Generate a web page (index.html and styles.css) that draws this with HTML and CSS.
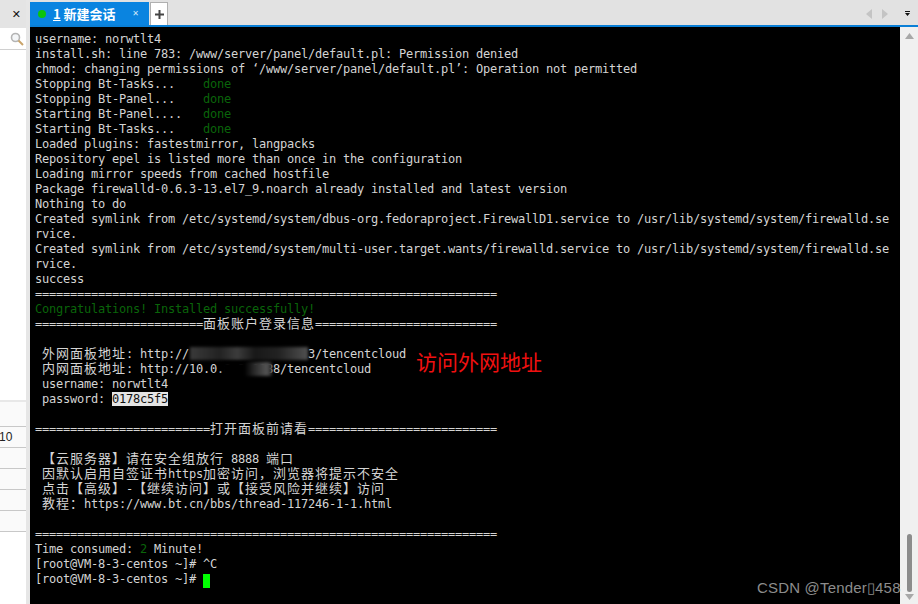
FILE: index.html
```html
<!DOCTYPE html>
<html lang="zh">
<head>
<meta charset="utf-8">
<title>新建会话</title>
<link rel="stylesheet" href="styles.css">
</head>
<body>
<div class="app">
  <aside class="side">
    <div class="side-head"><span class="side-close">✕</span></div>
    <div class="side-search">
      <svg class="search-ico" width="14" height="14" viewBox="0 0 14 14"><circle cx="5.5" cy="5.5" r="4" fill="#f4f6f8" stroke="#b4b4b4" stroke-width="1.6"/><path d="M8.5 8.5L13 13" stroke="#c9a36a" stroke-width="2"/></svg>
    </div>
    <div class="side-blank"></div>
    <div class="side-rows">
      <div class="side-row"></div>
      <div class="side-row"><span class="side-num">10</span></div>
      <div class="side-row"></div>
      <div class="side-row"></div>
      <div class="side-row"></div>
      <div class="side-row"></div>
    </div>
  </aside>
  <main class="main">
    <div class="tabs">
      <div class="tab">
        <span class="dot"></span>
        <span class="tab-title"><u>1</u> 新建会话</span>
        <span class="tab-x">✕</span>
      </div>
      <div class="plus">
        <svg width="11" height="11" viewBox="0 0 11 11"><path d="M5.5 1v9M1 5.5h9" stroke="#444" stroke-width="2"/></svg>
      </div>
      <div class="tab-nav">
        <svg width="6" height="10" viewBox="0 0 6 10"><path d="M6 0v10L0 5z" fill="#c4c4c4"/></svg>
        <svg width="6" height="10" viewBox="0 0 6 10"><path d="M0 0v10l6-5z" fill="#c4c4c4"/></svg>
        <svg class="tab-menu" width="5" height="5" viewBox="0 0 5 5"><path d="M0 0h5v1H0zM0 2h5L2.500 5z" fill="#111"/></svg>
      </div>
    </div>
    <div class="body">
      <div class="term">
        <div class="line">username: norwtlt4</div>
        <div class="line">install.sh: line 783: /www/server/panel/default.pl: Permission denied</div>
        <div class="line">chmod: changing permissions of ‘/www/server/panel/default.pl’: Operation not permitted</div>
        <div class="line">Stopping Bt-Tasks...    <span class="ok">done</span></div>
        <div class="line">Stopping Bt-Panel...    <span class="ok">done</span></div>
        <div class="line">Starting Bt-Panel....   <span class="ok">done</span></div>
        <div class="line">Starting Bt-Tasks...    <span class="ok">done</span></div>
        <div class="line">Loaded plugins: fastestmirror, langpacks</div>
        <div class="line">Repository epel is listed more than once in the configuration</div>
        <div class="line">Loading mirror speeds from cached hostfile</div>
        <div class="line">Package firewalld-0.6.3-13.el7_9.noarch already installed and latest version</div>
        <div class="line">Nothing to do</div>
        <div class="line">Created symlink from /etc/systemd/system/dbus-org.fedoraproject.FirewallD1.service to /usr/lib/systemd/system/firewalld.se</div>
        <div class="line">rvice.</div>
        <div class="line">Created symlink from /etc/systemd/system/multi-user.target.wants/firewalld.service to /usr/lib/systemd/system/firewalld.se</div>
        <div class="line">rvice.</div>
        <div class="line">success</div>
        <div class="line">==================================================================</div>
        <div class="line"><span class="ok">Congratulations! Installed successfully!</span></div>
        <div class="line">========================<span class="cn">面板账户登录信息</span>==========================</div>
        <div class="line"></div>
        <div class="line"> <span class="cn">外网面板地址</span>: http://<span class="hide">xx.xxx.xxx.xx:888</span>3/tencentcloud</div>
        <div class="line"> <span class="cn">内网面板地址</span>: http://10.0.8.3:8888/tencentcloud</div>
        <div class="line"> username: norwtlt4</div>
        <div class="line"> password: <span class="sel">0178c5f5</span></div>
        <div class="line"></div>
        <div class="line">=========================<span class="cn">打开面板前请看</span>===========================</div>
        <div class="line"></div>
        <div class="line"> <span class="cn">【云服务器】请在安全组放行</span> 8888 <span class="cn">端口</span></div>
        <div class="line"> <span class="cn">因默认启用自签证书</span>https<span class="cn">加密访问，浏览器将提示不安全</span></div>
        <div class="line"> <span class="cn">点击【高级】</span>-<span class="cn">【继续访问】或【接受风险并继续】访问</span></div>
        <div class="line"> <span class="cn">教程：</span>https://www.bt.cn/bbs/thread-117246-1-1.html</div>
        <div class="line"></div>
        <div class="line">==================================================================</div>
        <div class="line">Time consumed: <span class="ok">2</span> Minute!</div>
        <div class="line">[root@VM-8-3-centos ~]# ^C</div>
        <div class="line">[root@VM-8-3-centos ~]# <span class="cursor"> </span></div>
      </div>
      <div class="scroll">
        <svg width="9" height="6" viewBox="0 0 9 6"><path d="M4.500 0L9 6H0z" fill="#a8a8a8"/></svg>
        <div class="track"><div class="thumb"></div></div>
        <svg width="9" height="6" viewBox="0 0 9 6"><path d="M0 0h9L4.500 6z" fill="#a8a8a8"/></svg>
      </div>
      <div class="blur blur-a"></div>
      <div class="blur blur-b"></div>
      <div class="note">访问外网地址</div>
      <div class="mark">CSDN @Tender▯458</div>
    </div>
  </main>
</div>
</body>
</html>
```
FILE: styles.css
```css
* { box-sizing: border-box; }
html, body { margin: 0; width: 918px; height: 604px; overflow: hidden; }
.app { display: flex; width: 918px; height: 604px; background: #e6e6e6; }

.side { width: 26px; display: flex; flex-direction: column; background: #fff; }
.side-head { height: 28px; background: #e4e4e4; display: flex; justify-content: flex-end; align-items: center; padding-right: 5px; }
.side-close { font: bold 11px "DejaVu Sans", sans-serif; color: #111; }
.side-search { height: 22px; background: #fff; border-bottom: 1px solid #d0d0d0; display: flex; justify-content: flex-end; align-items: center; padding-right: 2px; }
.search-ico { flex: none; }
.side-blank { height: 352px; background: #fff; border-bottom: 2px solid #e8e8e8; }
.side-rows { flex: 1; background: #fff; }
.side-row { height: 21px; border-bottom: 1px solid #c8c8c8; background: #fafafa; font: 12px/20px "Liberation Sans", sans-serif; color: #222; overflow: hidden; }
.side-row:first-child { height: 25px; }
.side-num { display: block; margin-left: -1px; }

.main { flex: 1; margin-left: 4px; display: flex; flex-direction: column; min-width: 0; }
.tabs { height: 27px; flex: none; display: flex; align-items: flex-start; padding-top: 2px; background: #e2e2e2; border-bottom: 2px solid #0a7fd6; }
.tab { width: 119px; height: 23px; background: #0a84e0; color: #fff; display: flex; align-items: center; padding-left: 8px; position: relative; }
.dot { width: 8px; height: 8px; border-radius: 50%; background: #0cc40c; flex: none; }
.tab-title { margin-left: 7px; font: bold 13px "Noto Sans CJK SC", sans-serif; white-space: nowrap; }
.tab-x { margin-left: auto; margin-right: 10px; font: 8px "DejaVu Sans", sans-serif; color: #cfe6f8; }
.plus { width: 18px; height: 23px; margin-left: 1px; background: #fff; border: 1px solid #b0b0b0; border-bottom: 0; display: flex; align-items: center; justify-content: center; }
.tab-nav { margin-left: auto; display: flex; align-items: center; gap: 10px; height: 23px; padding-right: 8px; }
.tab-menu { margin-left: 7px; }

.body { flex: 1; display: flex; position: relative; min-height: 0; background: #000; }
.term { flex: 1; min-width: 0; padding: 5px 0 0 5px; background: #000; color: #d4d4d4; font: 12px/15px "DejaVu Sans Mono", monospace; letter-spacing: -0.224px; overflow: hidden; }
.line { height: 15px; white-space: pre; }
.ok { color: #0a640a; }
.cn { font: 13px/0 "Noto Sans CJK SC", sans-serif; letter-spacing: 1px; }
.sel { background: #e4e4e4; color: #111; }
.cursor { display: inline-block; width: 7px; height: 14px; background: #00ff00; vertical-align: -2px; }
.hide { visibility: hidden; }

.scroll { width: 18px; flex: none; background: #f0f0f0; display: flex; flex-direction: column; align-items: center; padding: 6px 0 4px; }
.track { flex: 1; width: 100%; display: flex; flex-direction: column; justify-content: flex-end; padding-bottom: 2px; align-items: center; }
.thumb { width: 5px; height: 58px; background: #8c8c8c; border-radius: 3px; }

.blur { position: absolute; filter: blur(1.5px); }
.blur-a { left: 160px; top: 320px; width: 118px; height: 13px; background: linear-gradient(90deg, #3a3a3a, #222 25%, #3c3c3c 40%, #181818 55%, #222 75%, #505050); }
.blur-b { left: 192px; top: 335px; width: 50px; height: 14px; background: linear-gradient(90deg, #000 45%, #2a2a2a 65%, #555 90%, #222); }
.note { position: absolute; left: 386px; top: 321px; color: #f01010; font: 21px/26px "Noto Sans CJK SC", sans-serif; white-space: nowrap; }
.mark { position: absolute; left: 727px; top: 552px; color: #8c8c8c; font: 15px/18px "Liberation Sans", sans-serif; letter-spacing: 0.18px; white-space: nowrap; }
```
